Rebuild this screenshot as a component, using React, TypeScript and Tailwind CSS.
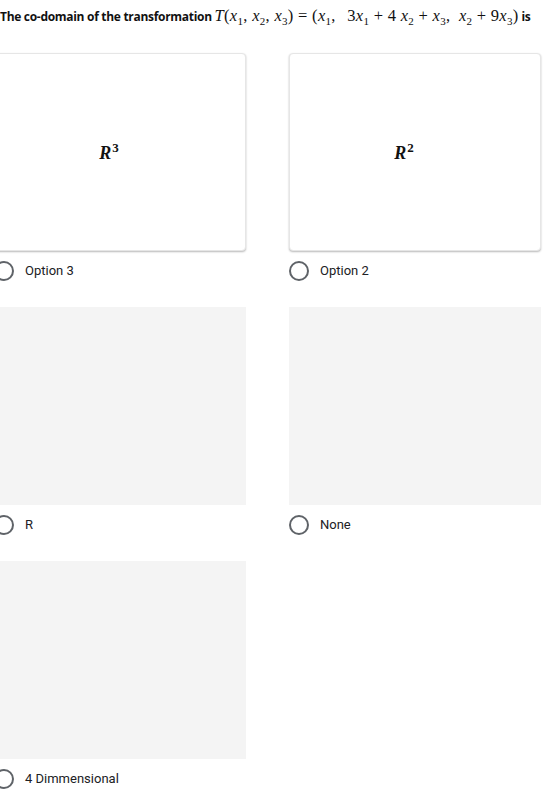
import React from "react";

type Option = { label: string; media: "r3" | "r2" | "blank" };

const options: Option[] = [
  { label: "Option 3", media: "r3" },
  { label: "Option 2", media: "r2" },
  { label: "R", media: "blank" },
  { label: "None", media: "blank" },
  { label: "4 Dimmensional", media: "blank" },
];

const V: React.FC<{ n: number }> = ({ n }) => (
  <span>
    <span className="italic">x</span>
    <span className="text-[11px] not-italic relative top-[4px]">{n}</span>
  </span>
);

function Formula() {
  return (
    <span className="font-['Liberation_Serif',serif] text-[16.5px] font-normal tracking-[0.3px]">
      <span className="italic">T</span>(<V n={1} />, <V n={2} />, <V n={3} />) = (<V n={1} />,{" "}
      <span className="ml-[7px]">3</span><V n={1} /> + 4 <V n={2} /> + <V n={3} />,{" "}
      <span className="ml-[4px]"></span><V n={2} /> + 9<V n={3} />)
    </span>
  );
}

function Media({ kind }: { kind: Option["media"] }) {
  if (kind === "blank") {
    return <div className="h-[198px] bg-[#f4f4f4]" />;
  }
  return (
    <div className="h-[198px] bg-white rounded-[4px] border border-[#e6e6e6] shadow-[0_1px_2px_rgba(0,0,0,0.28)] flex items-center justify-center pr-[22px] pt-[2px]">
      <span className="font-['Liberation_Serif',serif] italic font-bold text-[18px] text-[#111]">
        R<span className="text-[13px] not-italic font-bold relative -top-[7px] ml-[1px]">{kind === "r3" ? "3" : "2"}</span>
      </span>
    </div>
  );
}

export default function App() {
  return (
    <div className="w-[545px] h-[799px] bg-white overflow-hidden font-['Roboto',sans-serif]">
      <div className="pt-[6px] h-[53px] text-[12px] font-bold text-[#111] font-['Open_Sans',sans-serif] whitespace-nowrap leading-[20px] tracking-[-0.3px]">
        The co-domain of the transformation <Formula /> is
      </div>
      <div className="-ml-[6px] grid grid-cols-[252px_252px] gap-x-[43px] gap-y-[16px]">
        {options.map((o) => (
          <div key={o.label} className="flex flex-col">
            <Media kind={o.media} />
            <div className="h-[40px] flex items-center gap-[11px]">
              <span className="w-[20px] h-[20px] rounded-full border-2 border-[#5f6368] shrink-0" />
              <span className="text-[13px] text-[#202124]">{o.label}</span>
            </div>
          </div>
        ))}
      </div>
    </div>
  );
}
